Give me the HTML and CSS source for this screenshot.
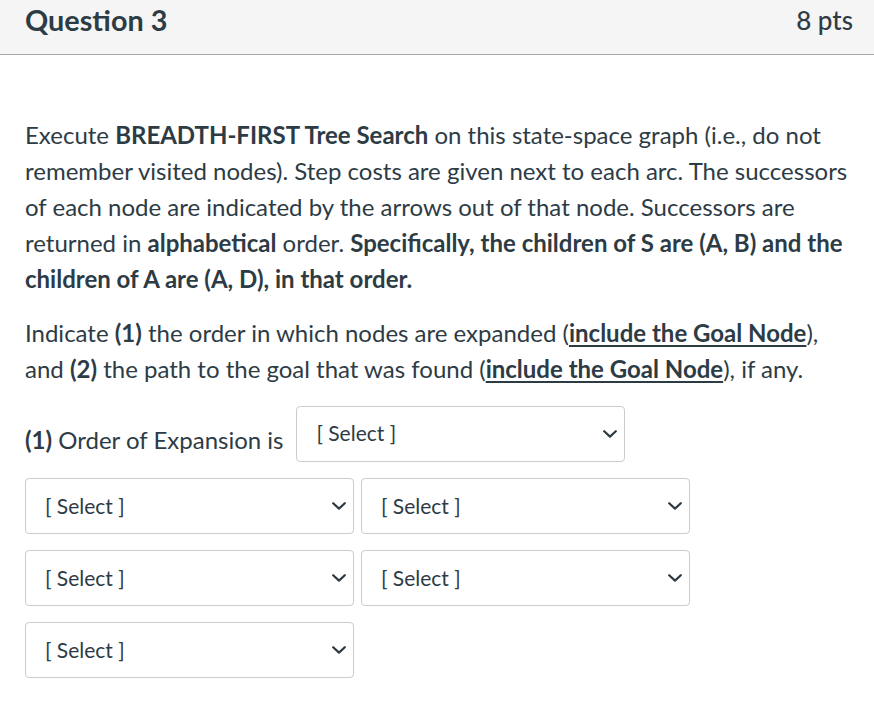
FILE: index.html
```html
<!DOCTYPE html>
<html lang="en">
<head>
<meta charset="utf-8">
<title>Question 3</title>
<link rel="stylesheet" href="styles.css">
</head>
<body>
<div class="question">
  <header class="q-header">
    <h2 class="q-title">Question 3</h2>
    <div class="q-points">8 pts</div>
  </header>
  <div class="q-body">
    <p>Execute <strong>BREADTH-FIRST Tree Search</strong> on this state-space graph (i.e., do not remember visited nodes). Step costs are given next to each arc. The successors of each node are indicated by the arrows out of that node. Successors are returned in <strong>alphabetical</strong> order. <strong>Specifically, the children of S are (A, B) and the children of A are (A, D), in that order.</strong></p>
    <p>Indicate <strong>(1)</strong> the order in which nodes are expanded (<a class="em-link">include the Goal Node</a>), and <strong>(2)</strong> the path to the goal that was found (<a class="em-link">include the Goal Node</a>), if any.</p>
    <div class="answers">
      <div class="first-row">
        <span class="label"><strong>(1)</strong> Order of Expansion is</span>
        <div class="select"><span>[ Select ]</span><svg class="chev" viewBox="0 0 14 8" width="14" height="8"><path d="M1.2 1.2 L7 6.6 L12.8 1.2" fill="none" stroke="#2d3b45" stroke-width="2.2" stroke-linecap="round" stroke-linejoin="round"/></svg></div>
      </div>
      <div class="grid">
        <div class="select"><span>[ Select ]</span><svg class="chev" viewBox="0 0 14 8" width="14" height="8"><path d="M1.2 1.2 L7 6.6 L12.8 1.2" fill="none" stroke="#2d3b45" stroke-width="2.2" stroke-linecap="round" stroke-linejoin="round"/></svg></div>
        <div class="select"><span>[ Select ]</span><svg class="chev" viewBox="0 0 14 8" width="14" height="8"><path d="M1.2 1.2 L7 6.6 L12.8 1.2" fill="none" stroke="#2d3b45" stroke-width="2.2" stroke-linecap="round" stroke-linejoin="round"/></svg></div>
        <div class="select"><span>[ Select ]</span><svg class="chev" viewBox="0 0 14 8" width="14" height="8"><path d="M1.2 1.2 L7 6.6 L12.8 1.2" fill="none" stroke="#2d3b45" stroke-width="2.2" stroke-linecap="round" stroke-linejoin="round"/></svg></div>
        <div class="select"><span>[ Select ]</span><svg class="chev" viewBox="0 0 14 8" width="14" height="8"><path d="M1.2 1.2 L7 6.6 L12.8 1.2" fill="none" stroke="#2d3b45" stroke-width="2.2" stroke-linecap="round" stroke-linejoin="round"/></svg></div>
        <div class="select"><span>[ Select ]</span><svg class="chev" viewBox="0 0 14 8" width="14" height="8"><path d="M1.2 1.2 L7 6.6 L12.8 1.2" fill="none" stroke="#2d3b45" stroke-width="2.2" stroke-linecap="round" stroke-linejoin="round"/></svg></div>
      </div>
    </div>
  </div>
</div>
</body>
</html>
```

FILE: styles.css
```css
html, body {
  margin: 0;
  padding: 0;
  background: #ffffff;
}

body {
  font-family: Lato, "Open Sans", "Liberation Sans", sans-serif;
  color: #2d3b45;
}

.q-header {
  display: flex;
  justify-content: space-between;
  align-items: flex-start;
  height: 55px;
  box-sizing: border-box;
  padding: 2px 21px 0 25px;
  background: #f5f5f5;
  border-bottom: 1px solid #a9a9a9;
}

.q-title {
  margin: 0;
  font-size: 28.8px;
  font-weight: 700;
  line-height: 36px;
}

.q-points {
  font-size: 26px;
  font-weight: 500;
  line-height: 36px;
}

.q-body {
  padding: 62px 25px 40px 25px;
  font-size: 24px;
  line-height: 36px;
}

.q-body p {
  margin: 0 0 18px 0;
}

.q-body strong {
  font-weight: 700;
}

.em-link {
  font-weight: 700;
  color: #2d3b45;
  text-decoration: underline;
  text-decoration-thickness: 2px;
  text-underline-offset: 3px;
}

.answers {
  margin-top: 19px;
  width: 665px;
  display: flex;
  flex-direction: column;
  gap: 16px;
}

.first-row {
  display: flex;
  align-items: flex-start;
  gap: 13px;
}

.label {
  margin-top: 16px;
  line-height: 36px;
}

.grid {
  display: grid;
  grid-template-columns: 329px 329px;
  column-gap: 7px;
  row-gap: 16px;
}

.select {
  box-sizing: border-box;
  width: 329px;
  height: 56px;
  border: 1px solid #c7cdd1;
  border-radius: 4px;
  background: #fff;
  display: flex;
  align-items: center;
  justify-content: space-between;
  padding: 0 7px 0 19px;
  font-size: 21px;
  line-height: 24px;
  color: #2d3b45;
}

.first-row .select span {
  margin-top: -2px;
}

.chev {
  display: block;
  flex: none;
}
```
